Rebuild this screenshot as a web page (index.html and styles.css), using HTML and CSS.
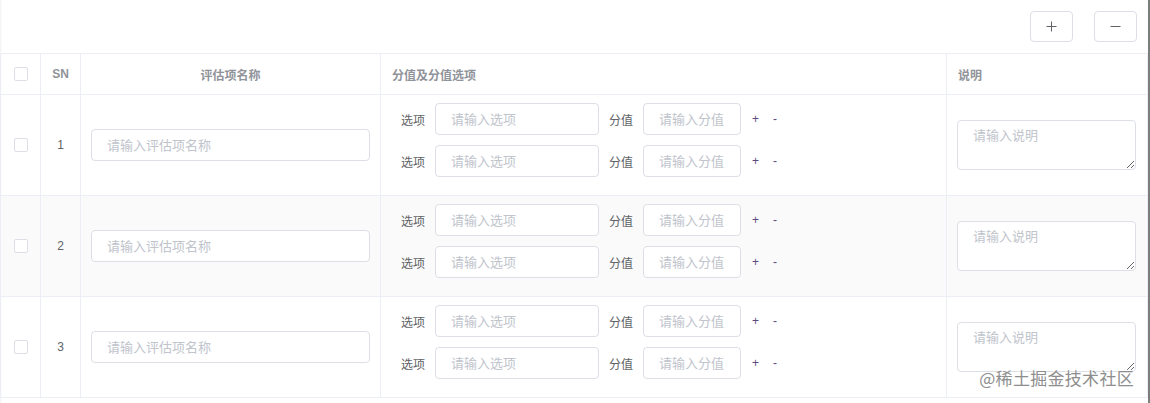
FILE: index.html
```html
<!DOCTYPE html>
<html lang="zh-CN">
<head>
<meta charset="utf-8">
<title>评估项</title>
<link rel="stylesheet" href="styles.css">
</head>
<body>
<div class="app">
  <main class="main">
    <div class="toolbar">
      <button class="tbtn" type="button" aria-label="添加">
        <svg width="11" height="11" viewBox="0 0 11 11"><path d="M5.5 0.5v10M0.5 5.5h10" stroke="#606266" stroke-width="1" fill="none"/></svg>
      </button>
      <button class="tbtn" type="button" aria-label="删除">
        <svg width="11" height="11" viewBox="0 0 11 11"><path d="M0.5 5.5h10" stroke="#606266" stroke-width="1" fill="none"/></svg>
      </button>
    </div>
    <table class="grid">
      <colgroup>
        <col class="c-check"><col class="c-sn"><col class="c-name"><col class="c-opts"><col class="c-desc">
      </colgroup>
      <thead>
        <tr>
          <th class="center"><span class="cb"></span></th>
          <th class="center">SN</th>
          <th class="center">评估项名称</th>
          <th class="left pad-opts">分值及分值选项</th>
          <th class="left pad-desc">说明</th>
        </tr>
      </thead>
      <tbody>
        <tr>
          <td class="center"><span class="cb"></span></td>
          <td class="center num">1</td>
          <td class="pad-name"><input class="inp" placeholder="请输入评估项名称"></td>
          <td class="pad-opts">
            <div class="opt"><span class="lbl">选项</span><input class="inp w-opt" placeholder="请输入选项"><span class="lbl">分值</span><input class="inp w-score" placeholder="请输入分值"><span class="op">+</span><span class="op">-</span></div>
            <div class="opt"><span class="lbl">选项</span><input class="inp w-opt" placeholder="请输入选项"><span class="lbl">分值</span><input class="inp w-score" placeholder="请输入分值"><span class="op">+</span><span class="op">-</span></div>
          </td>
          <td class="pad-desc"><textarea class="ta" placeholder="请输入说明"></textarea></td>
        </tr>
        <tr class="striped">
          <td class="center"><span class="cb"></span></td>
          <td class="center num">2</td>
          <td class="pad-name"><input class="inp" placeholder="请输入评估项名称"></td>
          <td class="pad-opts">
            <div class="opt"><span class="lbl">选项</span><input class="inp w-opt" placeholder="请输入选项"><span class="lbl">分值</span><input class="inp w-score" placeholder="请输入分值"><span class="op">+</span><span class="op">-</span></div>
            <div class="opt"><span class="lbl">选项</span><input class="inp w-opt" placeholder="请输入选项"><span class="lbl">分值</span><input class="inp w-score" placeholder="请输入分值"><span class="op">+</span><span class="op">-</span></div>
          </td>
          <td class="pad-desc"><textarea class="ta" placeholder="请输入说明"></textarea></td>
        </tr>
        <tr>
          <td class="center"><span class="cb"></span></td>
          <td class="center num">3</td>
          <td class="pad-name"><input class="inp" placeholder="请输入评估项名称"></td>
          <td class="pad-opts">
            <div class="opt"><span class="lbl">选项</span><input class="inp w-opt" placeholder="请输入选项"><span class="lbl">分值</span><input class="inp w-score" placeholder="请输入分值"><span class="op">+</span><span class="op">-</span></div>
            <div class="opt"><span class="lbl">选项</span><input class="inp w-opt" placeholder="请输入选项"><span class="lbl">分值</span><input class="inp w-score" placeholder="请输入分值"><span class="op">+</span><span class="op">-</span></div>
          </td>
          <td class="pad-desc"><textarea class="ta" placeholder="请输入说明"></textarea></td>
        </tr>
      </tbody>
    </table>
    <div class="watermark">@稀土掘金技术社区</div>
  </main>
  <div class="edge"></div>
</div>
</body>
</html>
```

FILE: styles.css
```css
* { box-sizing: border-box; }
html, body { margin: 0; padding: 0; background: #fff; }
body {
  font-family: "Liberation Sans", "Noto Sans CJK SC", sans-serif;
  color: #606266;
  font-size: 12px;
}
.app { display: flex; width: 1150px; height: 403px; overflow: hidden; }
.main {
  position: relative;
  width: 1148px;
  box-shadow: inset 2px 0 2px -1px rgba(0,0,0,0.06);
}
.edge { width: 2px; background: #7d7d7d; }

.toolbar {
  height: 53px;
  display: flex;
  justify-content: flex-end;
  align-items: flex-start;
  gap: 21px;
  padding: 11px 11px 0 0;
}
.tbtn {
  width: 43px;
  height: 31px;
  border: 1px solid #dcdfe6;
  border-radius: 4px;
  background: #fff;
  display: flex;
  align-items: center;
  justify-content: center;
  padding: 0;
}

.grid {
  border-collapse: collapse;
  table-layout: fixed;
  width: 1147px;
  border: 1px solid #ebeef5;
}
.c-check { width: 40px; }
.c-sn { width: 40px; }
.c-name { width: 300px; }
.c-opts { width: 566px; }
.c-desc { width: 201px; }

.grid th, .grid td {
  border: 1px solid #ebeef5;
  padding: 0;
  vertical-align: middle;
}
.grid th {
  height: 41px;
  font-size: 12px;
  font-weight: bold;
  color: #909399;
}
.grid td { height: 101px; }
.striped td { background: #fafafa; }
.center { text-align: center; }
.left { text-align: left; }
.num { font-size: 12px; color: #606266; }

.cb {
  display: inline-block;
  width: 14px;
  height: 14px;
  border: 1px solid #dcdfe6;
  border-radius: 2px;
  background: #fff;
  vertical-align: middle;
}

.pad-name { padding: 0 10px !important; }
.pad-opts { padding: 0 0 0 20px !important; }
.grid th.pad-opts { padding-left: 11px !important; }
.pad-desc { padding: 0 10px !important; }
.grid th.pad-desc { padding-left: 11px !important; }

.inp {
  display: block;
  width: 100%;
  height: 32px;
  border: 1px solid #dcdfe6;
  border-radius: 4px;
  background: #fff;
  padding: 0 15px;
  font-family: "Liberation Sans", "Noto Sans CJK SC", sans-serif;
  font-size: 13px;
  color: #606266;
  outline: none;
}
.inp::placeholder, .ta::placeholder { color: #c0c4cc; }

.opt {
  display: flex;
  align-items: center;
  margin-bottom: 10px;
}
.opt .lbl { font-size: 12px; color: #606266; white-space: nowrap; }
.opt .lbl + .inp { margin-left: 10px; }
.opt .w-opt { width: 164px; margin-right: 10px; }
.opt .w-score { width: 98px; margin-right: 11px; }
.op { font-size: 12px; color: #5d4a80; margin-right: 14px; }

.ta {
  display: block;
  width: 179px;
  height: 50px;
  border: 1px solid #dcdfe6;
  border-radius: 4px;
  background: #fff;
  padding: 5px 15px;
  font-family: "Liberation Sans", "Noto Sans CJK SC", sans-serif;
  font-size: 13px;
  line-height: 1.5;
  color: #606266;
  outline: none;
}

.watermark {
  position: absolute;
  right: 14px;
  top: 365px;
  font-family: "Noto Sans CJK SC", sans-serif;
  font-size: 17px;
  color: #8e8e8e;
  letter-spacing: 0.3px;
  text-shadow: 0 0 2px #fff, 0 0 2px #fff;
}
```
